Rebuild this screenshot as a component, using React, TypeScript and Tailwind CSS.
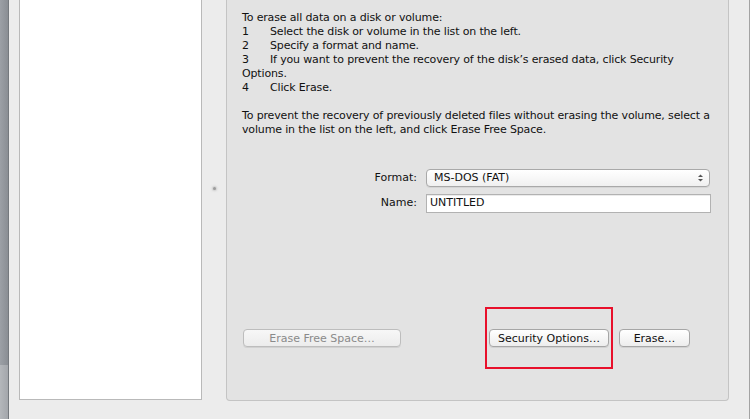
import React from "react";

const font = { fontFamily: '"Lucida Grande", "DejaVu Sans", sans-serif' };

function Btn({ children, w, disabled }: { children: React.ReactNode; w: string; disabled?: boolean }) {
  return (
    <div
      className={`${w} h-[18px] flex items-center justify-center rounded-[4px] border bg-gradient-to-b shadow-[0_1px_0_rgba(0,0,0,0.08)] text-[11px] leading-none ${
        disabled ? "text-[#8a8a8a] border-[#bdbdbd] from-[#f7f7f7] to-[#ececec]" : "text-[#111] border-[#a6a6a6] from-[#ffffff] to-[#ededed]"
      }`}
    >
      {children}
    </div>
  );
}

export default function App() {
  return (
    <div className="relative w-[750px] h-[419px] flex bg-[#ececec] overflow-hidden text-[#111]" style={font}>
      {/* left dark strip */}
      <div className="w-[9px] h-full flex flex-col border-r border-[#75797e]">
        <div className="h-[365px] bg-gradient-to-r from-[#9ca0a6] to-[#8a8e94]" />
        <div className="flex-1 bg-gradient-to-r from-[#b4b7bb] to-[#a3a6ab]" />
      </div>

      {/* source list */}
      <div className="ml-[10px] w-[183px] h-[400px] bg-white border-x border-b border-[#b9b9b9]" />

      {/* splitter */}
      <div className="w-[24px] h-full flex items-start justify-center">
        <div className="mt-[187px] w-[3px] h-[3px] rounded-full bg-[#9c9c9c] shadow-[0_0_2px_1px_rgba(180,180,180,0.6)]" />
      </div>

      {/* group box */}
      <div className="w-[503px] h-[401px] bg-[#e3e3e3] border-x border-b border-[#c4c4c4] rounded-b-[4px] flex flex-col pl-[15px] pt-[11px] pb-[53px] pr-[17px]">
        <div className="text-[11px] leading-[14px] whitespace-nowrap tracking-[-0.15px]">
          <div>To erase all data on a disk or volume:</div>
          <div className="flex"><span className="w-[28px]">1</span><span>Select the disk or volume in the list on the left.</span></div>
          <div className="flex"><span className="w-[28px]">2</span><span>Specify a format and name.</span></div>
          <div className="flex"><span className="w-[28px]">3</span><span>If you want to prevent the recovery of the disk’s erased data, click Security</span></div>
          <div>Options.</div>
          <div className="flex"><span className="w-[28px]">4</span><span>Click Erase.</span></div>
          <div className="h-[14px]" />
          <div>To prevent the recovery of previously deleted files without erasing the volume, select a</div>
          <div>volume in the list on the left, and click Erase Free Space.</div>
        </div>

        <div className="mt-[32px] flex flex-col gap-[7px] text-[11px]">
          <div className="flex items-center">
            <div className="w-[176px] shrink-0 text-right pr-[1px]">Format:</div>
            <div className="ml-[8px] w-[284px] shrink-0 h-[18px] rounded-[4px] border border-[#a9a9a9] bg-gradient-to-b from-[#ffffff] to-[#f0f0f0] shadow-[0_1px_0_rgba(0,0,0,0.06)] flex items-center pl-[7px] pr-[5px]">
              <span className="flex-1">MS-DOS (FAT)</span>
              <svg width="7" height="10" viewBox="0 0 7 10">
                <path d="M1 4 L3.5 1.5 L6 4 Z" fill="#555" />
                <path d="M1 6 L3.5 8.5 L6 6 Z" fill="#555" />
              </svg>
            </div>
          </div>
          <div className="flex items-center">
            <div className="w-[176px] shrink-0 text-right pr-[1px]">Name:</div>
            <div className="ml-[8px] w-[285px] shrink-0 h-[19px] border border-[#b2b2b2] bg-white shadow-[inset_0_1px_0_rgba(0,0,0,0.08)] flex items-center pl-[3px]">
              UNTITLED
            </div>
          </div>
        </div>

        <div className="mt-auto mr-[21px] flex items-center">
          <div className="ml-[1px]">
            <Btn w="w-[158px]" disabled>Erase Free Space…</Btn>
          </div>
          <div className="flex-1" />
          <Btn w="w-[120px]">Security Options…</Btn>
          <div className="w-[10px]" />
          <Btn w="w-[71px]">Erase…</Btn>
        </div>
      </div>

      {/* right edge */}
      <div className="flex-1 h-full border-r border-[#a3a3a3]" />

      {/* red highlight annotation */}
      <div className="absolute left-[485px] top-[307px] w-[128px] h-[62px] border-2 border-[#e8102b]" />
    </div>
  );
}
